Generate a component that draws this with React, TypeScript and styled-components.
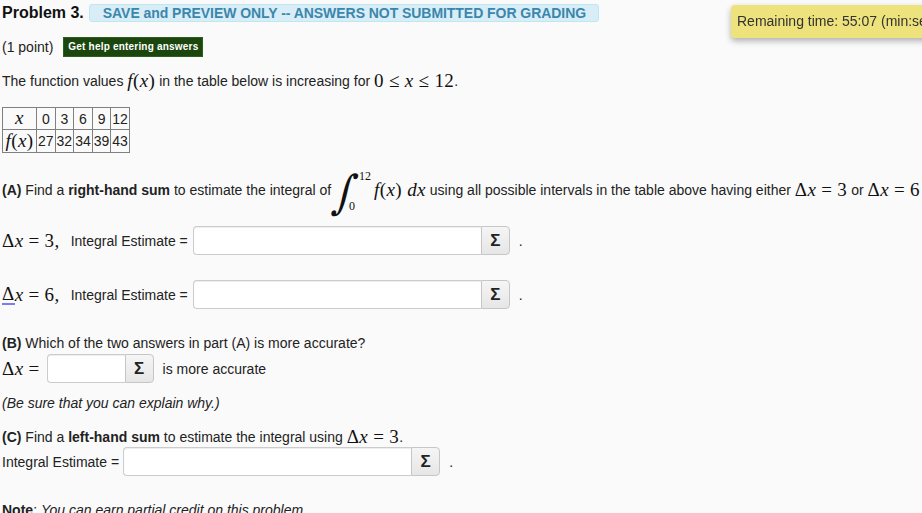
import React from "react";
import styled, { createGlobalStyle } from "styled-components";

const Global = createGlobalStyle`
  html, body { margin: 0; padding: 0; background: #fafafa; overflow: hidden; }
  body { font-family: "Liberation Sans", Arial, sans-serif; font-size: 14px; color: #222; }
`;

const Page = styled.div`
  padding: 0 0 0 2px;
  width: 920px;
  height: 513px;
  line-height: 20px;
`;

const Header = styled.div`
  display: flex;
  align-items: center;
  height: 26px;
`;

const Title = styled.span`
  font-weight: bold;
  font-size: 16px;
  color: #111;
`;

const Badge = styled.span`
  margin-left: 5px;
  height: 16px;
  line-height: 16px;
  padding: 0 12px 0 13px;
  border: 1px solid #bce8f1;
  border-radius: 3px;
  background: #d9edf7;
  color: #3a87ad;
  font-weight: bold;
  font-size: 14px;
  letter-spacing: -0.05px;
`;

const Timer = styled.div`
  position: fixed;
  top: 5px;
  left: 731px;
  height: 33px;
  line-height: 33px;
  padding: 0 6px;
  background: #ede27b;
  border-radius: 4px;
  box-shadow: 0 3px 6px rgba(0, 0, 0, 0.3);
  white-space: nowrap;
  color: #333;
  font-size: 14px;
`;

const Row = styled.div<{ $mt: number; $h?: number }>`
  display: flex;
  align-items: center;
  margin-top: ${(p) => p.$mt}px;
  height: ${(p) => p.$h ?? 20}px;
  white-space: nowrap;
`;

const HelpButton = styled.span`
  margin-left: 10px;
  height: 20px;
  box-sizing: border-box;
  padding: 0 4px;
  display: inline-flex;
  align-items: center;
  background: #1b470f;
  border: 1px solid #2c5f1d;
  color: #fff;
  font-weight: bold;
  font-size: 10px;
  letter-spacing: 0.2px;
`;

const M = styled.span<{ $i?: boolean; $b?: boolean; $sz?: number }>`
  font-family: "Liberation Serif", "Times New Roman", serif;
  font-size: ${(p) => p.$sz ?? 19}px;
  font-style: ${(p) => (p.$i ? "italic" : "normal")};
  font-weight: ${(p) => (p.$b ? "bold" : "normal")};
  color: #111;
  letter-spacing: 0.4px;
`;

const Op = styled(M)`
  margin: 0 5px;
`;

const DeltaMark = styled(M)`
  display: inline-block;
  line-height: 18px;
  border-bottom: 2px solid #7c7cf0;
`;

const Table = styled.table`
  margin-top: 16px;
  border-collapse: collapse;
  border: 1px solid #808080;
  td {
    border: 1px solid #808080;
    padding: 0 1px;
    text-align: center;
    line-height: 20px;
  }
  td:first-child {
    width: 31px;
  }
`;

const TR = styled.tr<{ $h: number }>`
  height: ${(p) => p.$h}px;
`;

const Integral = styled.span`
  display: inline-grid;
  grid-template-columns: auto auto;
  grid-template-rows: 24px 24px;
  margin: 0 3px -4px 4px;
`;

const IntSign = styled.span`
  grid-row: 1 / span 2;
  grid-column: 1;
  font-family: "DejaVu Serif", serif;
  font-size: 40px;
  line-height: 48px;
  color: #111;
  transform: skewX(-12deg) scaleY(1.15);
`;

const Upper = styled.span`
  grid-row: 1;
  grid-column: 2;
  font-family: "Liberation Serif", serif;
  font-size: 12px;
  line-height: 14px;
  margin-left: 3px;
  align-self: start;
  margin-top: 1px;
  color: #111;
`;

const Lower = styled.span`
  grid-row: 2;
  grid-column: 2;
  font-family: "Liberation Serif", serif;
  font-size: 12px;
  line-height: 14px;
  margin-left: -7px;
  align-self: end;
  margin-bottom: 3px;
  color: #111;
`;

const Label = styled.span<{ $ml?: number }>`
  margin-left: ${(p) => p.$ml ?? 0}px;
`;

const InputGroup = styled.span<{ $ml: number }>`
  display: inline-flex;
  margin-left: ${(p) => p.$ml}px;
  height: 29px;
`;

const TextField = styled.span<{ $w: number }>`
  box-sizing: border-box;
  width: ${(p) => p.$w}px;
  height: 29px;
  background: #fff;
  border: 1px solid #ccc;
  border-right: none;
  border-radius: 4px 0 0 4px;
  box-shadow: inset 0 1px 1px rgba(0, 0, 0, 0.075);
`;

const SigmaButton = styled.span`
  box-sizing: border-box;
  width: 29px;
  height: 29px;
  display: flex;
  align-items: center;
  justify-content: center;
  background: linear-gradient(#f5f5f5, #e6e6e6);
  border: 1px solid #c6c6c6;
  border-radius: 0 4px 4px 0;
  font-family: "Liberation Sans", Arial, sans-serif;
  font-weight: bold;
  font-size: 17px;
  color: #222;
`;

const Dot = styled.span<{ $ml: number }>`
  margin-left: ${(p) => p.$ml}px;
`;

const Italic = styled.span`
  font-style: italic;
`;

function Answer({ w, ml }: { w: number; ml: number }) {
  return (
    <InputGroup $ml={ml}>
      <TextField $w={w} />
      <SigmaButton>Σ</SigmaButton>
    </InputGroup>
  );
}

function DeltaX({ mark }: { mark?: boolean }) {
  return (
    <>
      {mark ? <DeltaMark>Δ</DeltaMark> : <M>Δ</M>}
      <M $i>x</M>
    </>
  );
}

function Fx() {
  return (
    <>
      <M $i>f</M>
      <M>(</M>
      <M $i>x</M>
      <M>)</M>
    </>
  );
}

export default function App() {
  return (
    <Page>
      <Global />
      <Header>
        <Title>Problem 3.</Title>
        <Badge>SAVE and PREVIEW ONLY -- ANSWERS NOT SUBMITTED FOR GRADING</Badge>
      </Header>
      <Timer>Remaining time: 55:07 (min:sec)</Timer>

      <Row $mt={11}>
        <span>(1 point)</span>
        <HelpButton>Get help entering answers</HelpButton>
      </Row>

      <Row $mt={14}>
        <span>The function values&nbsp;</span>
        <Fx />
        <span>&nbsp;in the table below is increasing for&nbsp;</span>
        <M>0</M>
        <Op>≤</Op>
        <M $i>x</M>
        <Op>≤</Op>
        <M>12</M>
        <span>.</span>
      </Row>

      <Table>
        <tbody>
          <TR $h={22}>
            <td><M $i>x</M></td>
            <td>0</td>
            <td>3</td>
            <td>6</td>
            <td>9</td>
            <td>12</td>
          </TR>
          <TR $h={23}>
            <td><Fx /></td>
            <td>27</td>
            <td>32</td>
            <td>34</td>
            <td>39</td>
            <td>43</td>
          </TR>
        </tbody>
      </Table>

      <Row $mt={15} $h={44}>
        <b>(A)</b>
        <span>&nbsp;Find a&nbsp;</span>
        <b>right-hand sum</b>
        <span>&nbsp;to estimate the integral of</span>
        <Integral>
          <IntSign>∫</IntSign>
          <Upper>12</Upper>
          <Lower>0</Lower>
        </Integral>
        <Fx />
        <M>&nbsp;</M>
        <M $i>dx</M>
        <span>&nbsp;using all possible intervals in the table above having either&nbsp;</span>
        <DeltaX />
        <Op>=</Op>
        <M>3</M>
        <span>&nbsp;or&nbsp;</span>
        <DeltaX />
        <Op>=</Op>
        <M>6</M>
      </Row>

      <Row $mt={14} $h={29}>
        <DeltaX />
        <Op>=</Op>
        <M>3</M>
        <M>,</M>
        <Label $ml={11}>Integral Estimate =</Label>
        <Answer w={288} ml={5} />
        <Dot $ml={9}>.</Dot>
      </Row>

      <Row $mt={25} $h={29}>
        <DeltaX mark />
        <Op>=</Op>
        <M>6</M>
        <M>,</M>
        <Label $ml={11}>Integral Estimate =</Label>
        <Answer w={288} ml={5} />
        <Dot $ml={9}>.</Dot>
      </Row>

      <Row $mt={24}>
        <b>(B)</b>
        <span>&nbsp;Which of the two answers in part (A) is more accurate?</span>
      </Row>

      <Row $mt={1} $h={29}>
        <DeltaX />
        <Op>=</Op>
        <Answer w={78} ml={2} />
        <Label $ml={9}>is more accurate</Label>
      </Row>

      <Row $mt={10}>
        <Italic>(Be sure that you can explain why.)</Italic>
      </Row>

      <Row $mt={14}>
        <b>(C)</b>
        <span>&nbsp;Find a&nbsp;</span>
        <b>left-hand sum</b>
        <span>&nbsp;to estimate the integral using&nbsp;</span>
        <DeltaX />
        <Op>=</Op>
        <M>3</M>
        <span>.</span>
      </Row>

      <Row $mt={0} $h={29}>
        <span>Integral Estimate =</span>
        <Answer w={288} ml={4} />
        <Dot $ml={9}>.</Dot>
      </Row>

      <Row $mt={24}>
        <b>Note</b>
        <span>:&nbsp;</span>
        <Italic>You can earn partial credit on this problem.</Italic>
      </Row>
    </Page>
  );
}
